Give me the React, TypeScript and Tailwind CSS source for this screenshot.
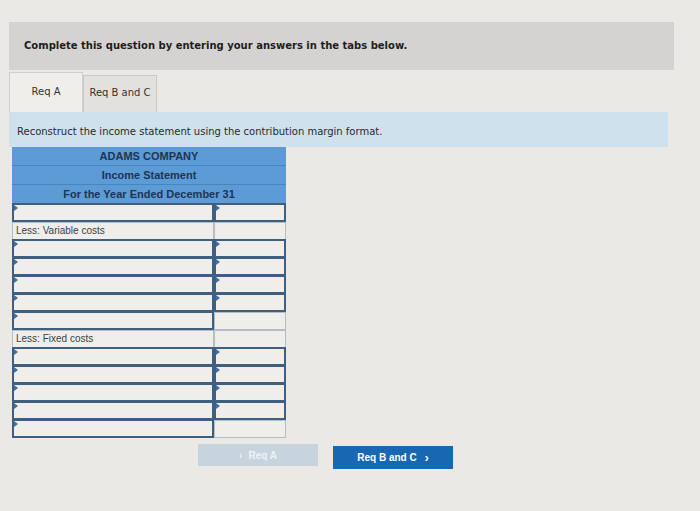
import React from "react";

type Row = { label?: string; leftInput: boolean; rightInput: boolean };

const rows: Row[] = [
  { leftInput: true, rightInput: true },
  { label: "Less: Variable costs", leftInput: false, rightInput: false },
  { leftInput: true, rightInput: true },
  { leftInput: true, rightInput: true },
  { leftInput: true, rightInput: true },
  { leftInput: true, rightInput: true },
  { leftInput: true, rightInput: false },
  { label: "Less: Fixed costs", leftInput: false, rightInput: false },
  { leftInput: true, rightInput: true },
  { leftInput: true, rightInput: true },
  { leftInput: true, rightInput: true },
  { leftInput: true, rightInput: true },
  { leftInput: true, rightInput: false },
];

function Marker() {
  return (
    <span className="absolute left-0 top-0 w-0 h-0 border-t-[3px] border-b-[3px] border-l-[4px] border-t-transparent border-b-transparent border-l-[#3b6fa6]" />
  );
}

function Cell({ input, label, wide }: { input: boolean; label?: string; wide: boolean }) {
  return (
    <div
      className={
        (wide ? "w-[202px] " : "w-[72px] ") +
        "relative h-[18px] flex items-center px-[3px] " +
        (input
          ? "border-2 border-[#3f5f82] -mt-[1px] h-[19px]"
          : "border border-[#b5bcc3]")
      }
    >
      {input && <Marker />}
      {label && (
        <span className="text-[10px] text-[#3a3f46] font-['Liberation_Sans',sans-serif] leading-none">
          {label}
        </span>
      )}
    </div>
  );
}

export default function App() {
  return (
    <div className="w-[700px] h-[511px] bg-[#ebe9e5] overflow-hidden font-['DejaVu_Sans',sans-serif] text-[#2a2a2a]">
      <div className="pt-[22px] pl-[9px] pr-[26px]">
        <div className="h-[48px] bg-[#d4d3d1] flex items-center pl-[15px]">
          <span className="text-[10px] font-bold text-[#1e1e1e] -mt-[1px]">
            Complete this question by entering your answers in the tabs below.
          </span>
        </div>
        <div className="flex mt-[2px] items-end h-[40px]">
          <div className="w-[74px] h-[40px] bg-[#efeeeb] border border-[#cfcfcf] border-b-0 flex items-center justify-center text-[10px] text-[#333] pb-[2px]">
            Req A
          </div>
          <div className="w-[74px] h-[37px] bg-[#e2e1de] border border-[#c9c8c5] border-b-0 flex items-center justify-center text-[10px] text-[#333] pb-[3px]">
            Req B and C
          </div>
        </div>
        <div className="h-[35px] bg-[#cfe1ec] flex items-center pl-[8px] mr-[6px]">
          <span className="text-[10px] text-[#2a2a2a] mt-[4px]">
            Reconstruct the income statement using the contribution margin format.
          </span>
        </div>
        <div className="ml-[3px] w-[274px]">
          <div className="bg-[#5c9bd6] text-[#1d3552] font-bold font-['Liberation_Sans',sans-serif] text-[11px]">
            <div className="h-[19px] flex items-center justify-center border-b border-[#4a84bd]">ADAMS COMPANY</div>
            <div className="h-[19px] flex items-center justify-center border-b border-[#4a84bd]">Income Statement</div>
            <div className="h-[19px] flex items-center justify-center">For the Year Ended December 31</div>
          </div>
          <div className="bg-[#efeeea]">
            {rows.map((r, i) => (
              <div key={i} className="flex">
                <Cell wide input={r.leftInput} label={r.label} />
                <Cell wide={false} input={r.rightInput} />
              </div>
            ))}
          </div>
        </div>
        <div className="flex mt-[6px] ml-[189px] gap-[15px]">
          <div className="w-[120px] h-[22px] bg-[#c7d4de] flex items-center justify-center text-[10px] font-bold text-[#eef2f5] font-['Liberation_Sans',sans-serif]">
            <span className="mr-[6px]">‹</span>Req A
          </div>
          <div className="w-[120px] h-[23px] mt-[2px] bg-[#1767b3] flex items-center justify-center text-[10px] font-bold text-white font-['Liberation_Sans',sans-serif]">
            Req B and C<span className="ml-[8px] text-[12px]">›</span>
          </div>
        </div>
      </div>
    </div>
  );
}
